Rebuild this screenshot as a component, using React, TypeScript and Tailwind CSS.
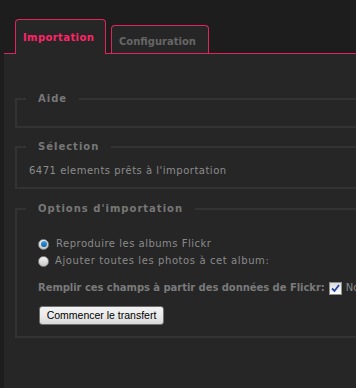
import React from "react";

const Radio = ({ checked }: { checked?: boolean }) => (
  <span className="w-[11px] h-[11px] rounded-full border border-[#8a8a8a] bg-gradient-to-b from-[#f4f4f4] to-[#c8c8c8] flex items-center justify-center shrink-0">
    {checked && <span className="w-[6px] h-[6px] rounded-full bg-gradient-to-b from-[#3fa4e8] to-[#0b5fa8]" />}
  </span>
);

const App = () => {
  return (
    <div className="w-[356px] h-[388px] overflow-hidden bg-[#1d1d1d] font-['DejaVu_Sans',Verdana,sans-serif] flex flex-col">
      {/* tabs */}
      <div className="flex items-end gap-[5px] pl-[15px] pt-[19px]">
        <div className="relative z-10 -mb-px h-[35px] w-[91px] border border-b-0 border-[#e0245e] rounded-t-[4px] bg-[#262626] flex items-center pl-[7px] pt-[1px]">
          <span className="text-[10px] font-bold tracking-[0.4px] text-[#ff2468]">Importation</span>
        </div>
        <div className="h-[28px] w-[98px] border border-b-0 border-[#e0245e] rounded-t-[4px] bg-[#262626] flex items-center pl-[7px] pt-[4px]">
          <span className="text-[10px] font-bold text-[#666]">Configuration</span>
        </div>
      </div>

      {/* panel */}
      <div className="ml-[4px] flex-1 border-t border-[#e0245e] bg-[#262626] pl-[11px] pt-[38px] overflow-hidden">
        <fieldset className="border-2 border-[#333] mr-[-40px]">
          <legend className="ml-[9px] px-[12px] text-[10px] leading-[14px] font-bold tracking-[1px] text-[#777]">Aide</legend>
          <div className="h-[20px]" />
        </fieldset>

        <fieldset className="border-2 border-[#333] mr-[-40px] mt-[12px]">
          <legend className="ml-[9px] px-[12px] text-[10px] leading-[14px] font-bold tracking-[1px] text-[#777]">Sélection</legend>
          <p className="pl-[12px] pt-[10px] pb-[9px] text-[10px] leading-[14px] tracking-[0.5px] text-[#8c8c8c]">6471 elements prêts à l'importation</p>
        </fieldset>

        <fieldset className="border-2 border-[#333] mr-[-40px] mt-[13px]">
          <legend className="ml-[9px] px-[12px] text-[10px] leading-[14px] font-bold tracking-[1px] text-[#777]">Options d'importation</legend>
          <div className="pl-[21px] pt-[21px] pb-[11px] text-[10px] leading-[14px]">
            <div className="flex flex-col gap-[3px]">
              <label className="flex items-center gap-[7px] text-[#8a8a8a] tracking-[0.5px]">
                <Radio checked />
                Reproduire les albums Flickr
              </label>
              <label className="flex items-center gap-[6px] text-[#8a8a8a] tracking-[0.6px]">
                <Radio />
                Ajouter toutes les photos à cet album:
              </label>
            </div>
            <div className="mt-[13px] flex items-center gap-[4px] whitespace-nowrap">
              <span className="font-bold tracking-[-0.05px] text-[#7a7a7a]">Remplir ces champs à partir des données de Flickr:</span>
              <span className="w-[13px] h-[13px] border border-[#8e8f8f] bg-gradient-to-b from-[#dcdcdc] to-[#ffffff] flex items-center justify-center shrink-0">
                <svg width="9" height="9" viewBox="0 0 9 9">
                  <path d="M1 4.5 L3.5 7 L8 1" fill="none" stroke="#2144a8" strokeWidth="1.8" />
                </svg>
              </span>
              <span className="text-[#8a8a8a]">Nom</span>
            </div>
            <button className="mt-[11px] ml-[1px] h-[19px] w-[125px] rounded-[3px] border border-[#707070] bg-gradient-to-b from-[#f2f2f2] via-[#ebebeb] to-[#d8d8d8] text-[10.5px] leading-none text-black font-['Liberation_Sans',Arial,sans-serif] flex items-center justify-center">
              Commencer le transfert
            </button>
          </div>
        </fieldset>
      </div>
    </div>
  );
};

export default App;
